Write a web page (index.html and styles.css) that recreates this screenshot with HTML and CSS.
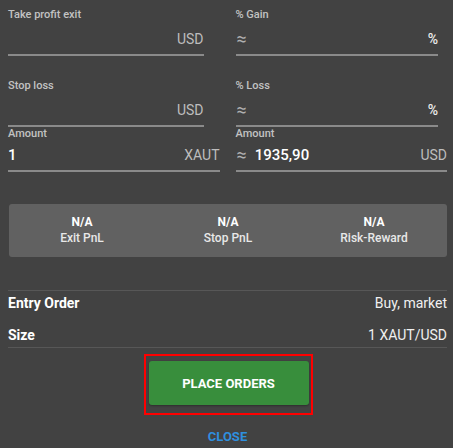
FILE: index.html
```html
<!DOCTYPE html>
<html>
<head>
<meta charset="utf-8">
<link rel="stylesheet" href="styles.css">
</head>
<body>
<div class="panel">
  <div class="grid">
    <div class="field narrow-l">
      <div class="label">Take profit exit</div>
      <div class="input"><span class="spacer"></span><span class="unit">USD</span></div>
    </div>
    <div class="field narrow-r">
      <div class="label">% Gain</div>
      <div class="input"><span class="approx">≈</span><span class="spacer"></span><span class="pct">%</span></div>
    </div>
    <div class="field narrow-l row2">
      <div class="label">Stop loss</div>
      <div class="input"><span class="spacer"></span><span class="unit">USD</span></div>
    </div>
    <div class="field narrow-r row2">
      <div class="label">% Loss</div>
      <div class="input"><span class="approx">≈</span><span class="spacer"></span><span class="pct">%</span></div>
    </div>
    <div class="field row3">
      <div class="label">Amount</div>
      <div class="input tight"><span class="value">1</span><span class="spacer"></span><span class="unit">XAUT</span></div>
    </div>
    <div class="field row3">
      <div class="label">Amount</div>
      <div class="input tight"><span class="approx">≈</span><span class="value num">1935,90</span><span class="spacer"></span><span class="unit">USD</span></div>
    </div>
  </div>

  <div class="summary">
    <div class="stat"><div class="stat-val">N/A</div><div class="stat-lbl">Exit PnL</div></div>
    <div class="stat"><div class="stat-val">N/A</div><div class="stat-lbl">Stop PnL</div></div>
    <div class="stat"><div class="stat-val">N/A</div><div class="stat-lbl">Risk-Reward</div></div>
  </div>

  <div class="details">
    <div class="drow"><span class="dkey">Entry Order</span><span class="dval">Buy, market</span></div>
    <div class="drow"><span class="dkey">Size</span><span class="dval">1 XAUT/USD</span></div>
  </div>

  <div class="actions">
    <div class="highlight"><button class="place">PLACE ORDERS</button></div>
    <button class="close">CLOSE</button>
  </div>
</div>
</body>
</html>
```

FILE: styles.css
```css
html, body {
  margin: 0;
  padding: 0;
  background: #424242;
}
body {
  font-family: Roboto, "Liberation Sans", Arial, sans-serif;
  color: #ffffff;
  width: 453px;
  height: 448px;
  overflow: hidden;
}
.panel {
  padding: 8px 6px 0 8px;
}
.grid {
  display: grid;
  grid-template-columns: 1fr 1fr;
  column-gap: 16px;
}
.field {
  display: flex;
  flex-direction: column;
}
.narrow-l { margin-right: 16px; }
.narrow-r { margin-right: 9px; }
.row2 { margin-top: 23px; }
.row3 { margin-top: 0; }
.label {
  font-size: 11px;
  line-height: 13px;
  font-weight: 500;
  color: #c2c2c2;
  white-space: nowrap;
}
.input {
  display: flex;
  align-items: center;
  height: 20px;
  margin-top: 8px;
  padding-bottom: 5px;
  border-bottom: 2px solid #8a8a8a;
}
.input.tight {
  margin-top: 5px;
}
.spacer { flex: 1; }
.unit {
  font-size: 14px;
  line-height: 20px;
  color: #bdbdbd;
}
.pct {
  font-size: 14px;
  line-height: 20px;
  font-weight: 500;
  color: #ececec;
}
.approx {
  font-size: 18px;
  line-height: 20px;
  color: #b0b0b0;
  margin-left: 1px;
}
.value {
  font-size: 15px;
  line-height: 20px;
  font-weight: 500;
  color: #ffffff;
}
.value.num {
  margin-left: 8px;
}
.summary {
  margin-top: 32px;
  margin-left: 1px;
  background: #616161;
  border-radius: 3px;
  display: grid;
  grid-template-columns: 1fr 1fr 1fr;
  padding: 10px 0 11px;
}
.stat {
  text-align: center;
}
.stat-val {
  font-size: 12px;
  line-height: 16px;
  font-weight: 700;
  color: #ffffff;
}
.stat-lbl {
  font-size: 12px;
  line-height: 16px;
  font-weight: 500;
  color: #e8e8e8;
}
.details {
  margin-top: 33px;
  border-top: 1px solid #575757;
  border-bottom: 1px solid #575757;
  padding: 2px 0 2px;
  display: flex;
  flex-direction: column;
  gap: 12px;
}
.drow {
  display: flex;
  justify-content: space-between;
  font-size: 14px;
  line-height: 20px;
}
.dkey {
  font-weight: 700;
  color: #ffffff;
}
.dval {
  color: #f0f0f0;
}
.actions {
  display: flex;
  flex-direction: column;
  align-items: center;
}
.highlight {
  margin-top: 6px;
  border: 2px solid #ff0000;
  padding: 5px 2px 8px 3px;
  margin-left: 1px;
}
.place {
  display: block;
  width: 160px;
  height: 44px;
  border: none;
  border-radius: 3px;
  background: #388e3c;
  color: #ffffff;
  font-family: Roboto, "Liberation Sans", Arial, sans-serif;
  font-size: 13px;
  font-weight: 700;
  padding: 0;
  box-shadow: 0 1px 2px rgba(0,0,0,0.3);
}
.close {
  margin-top: 14px;
  background: none;
  border: none;
  padding: 0;
  font-family: Roboto, "Liberation Sans", Arial, sans-serif;
  font-size: 13px;
  line-height: 16px;
  font-weight: 700;
  color: #2f8fdf;
}
```
